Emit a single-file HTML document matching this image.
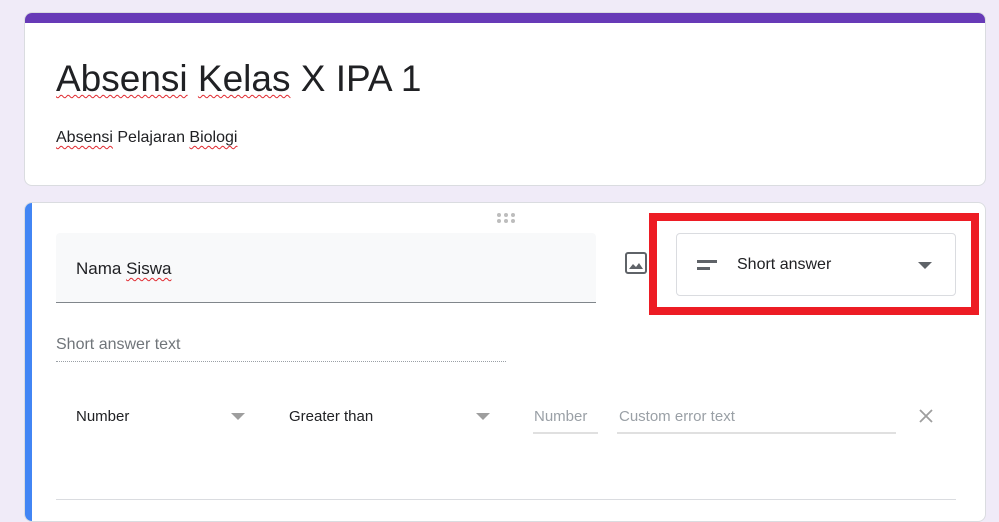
<!DOCTYPE html>
<html><head><style>
body{margin:0;width:999px;height:503px;background:#f0ebf8;position:relative;overflow:hidden;font-family:"Liberation Sans",Roboto,sans-serif;}
.a{position:absolute}
.sq{text-decoration:underline wavy #e0282e;text-decoration-thickness:1px;text-underline-offset:3px}
</style></head><body>
<div class="a" style="left:24px;top:12px;width:962px;height:174px;background:#fff;border-radius:8px;border:1px solid #dadce0;box-sizing:border-box;overflow:hidden">
 <div style="height:10px;background:#673ab7"></div>
</div>
<div class="a" style="left:56px;top:55px;font-size:37px;color:#202124;line-height:48px"><span class="sq">Absensi</span> <span class="sq">Kelas</span> X IPA 1</div>
<div class="a" style="left:56px;top:128px;font-size:16px;color:#202124;line-height:20px"><span class="sq">Absensi</span> Pelajaran <span class="sq">Biologi</span></div>

<div class="a" style="left:24px;top:202px;width:962px;height:320px;background:#fff;border-radius:8px;border:1px solid #dadce0;box-sizing:border-box;overflow:hidden">
 <div style="position:absolute;left:0;top:0;width:7px;height:100%;background:#4285f4"></div>
</div>
<svg class="a" style="left:496px;top:212px" width="20" height="12"><g fill="#bdbdbd"><circle cx="3" cy="3" r="2"/><circle cx="10" cy="3" r="2"/><circle cx="17" cy="3" r="2"/><circle cx="3" cy="9" r="2"/><circle cx="10" cy="9" r="2"/><circle cx="17" cy="9" r="2"/></g></svg>
<div class="a" style="left:56px;top:233px;width:540px;height:69px;background:#f8f9fa;border-radius:4px 4px 0 0;border-bottom:1px solid #80868b"></div>
<div class="a" style="left:76px;top:259px;font-size:17px;color:#202124">Nama <span class="sq">Siswa</span></div>
<svg class="a" style="left:624px;top:251px" width="24" height="24" viewBox="0 0 24 24"><rect x="2" y="2" width="20" height="20" rx="2" fill="none" stroke="#5f6368" stroke-width="2"/><path d="M5 18l4-5 3 3 3-4 4 6z" fill="#5f6368"/></svg>

<div class="a" style="left:649px;top:213px;width:330px;height:102px;border:8px solid #ed1c24;box-sizing:border-box"></div>
<div class="a" style="left:676px;top:233px;width:280px;height:63px;border:1px solid #dadce0;border-radius:4px;box-sizing:border-box"></div>
<div class="a" style="left:697px;top:260px;width:20px;height:3px;background:#5f6368"></div>
<div class="a" style="left:697px;top:267px;width:13px;height:3px;background:#5f6368"></div>
<div class="a" style="left:737px;top:256px;font-size:16px;color:#202124">Short answer</div>
<div class="a" style="left:918px;top:262px;border-left:7px solid transparent;border-right:7px solid transparent;border-top:7px solid #5f6368;width:0;height:0"></div>

<div class="a" style="left:56px;top:336px;font-size:16px;color:#70757a">Short answer text</div>
<div class="a" style="left:56px;top:361px;width:450px;border-top:1px dotted #9aa0a6"></div>

<div class="a" style="left:76px;top:408px;font-size:15px;color:#202124">Number</div>
<div class="a" style="left:231px;top:413px;border-left:7px solid transparent;border-right:7px solid transparent;border-top:7px solid #9e9e9e;width:0;height:0"></div>
<div class="a" style="left:289px;top:408px;font-size:15px;color:#202124">Greater than</div>
<div class="a" style="left:476px;top:413px;border-left:7px solid transparent;border-right:7px solid transparent;border-top:7px solid #9e9e9e;width:0;height:0"></div>
<div class="a" style="left:534px;top:408px;font-size:15px;color:#9aa0a6">Number</div>
<div class="a" style="left:533px;top:432px;width:65px;height:2px;background:#e0e0e0"></div>
<div class="a" style="left:619px;top:408px;font-size:15px;color:#9aa0a6">Custom error text</div>
<div class="a" style="left:617px;top:432px;width:279px;height:2px;background:#e0e0e0"></div>
<svg class="a" style="left:918px;top:408px" width="16" height="16"><path d="M2 2L14 14M14 2L2 14" stroke="#9e9e9e" stroke-width="1.8"/></svg>
<div class="a" style="left:56px;top:499px;width:900px;height:1px;background:#dadce0"></div>
</body></html>
